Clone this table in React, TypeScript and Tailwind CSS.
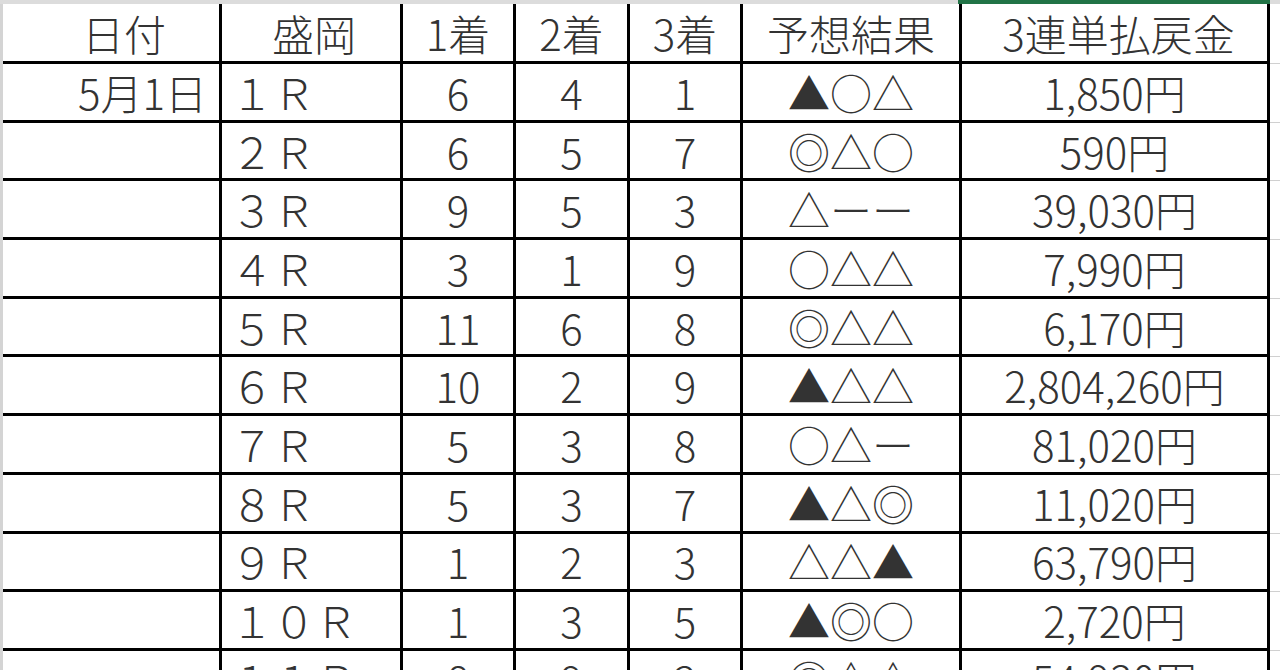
import React from "react";

type Row = { date: string; race: string; p1: string; p2: string; p3: string; marks: string; pay: string };

const rows: Row[] = [
  { date: "5月1日", race: "１Ｒ", p1: "6", p2: "4", p3: "1", marks: "▲○△", pay: "1,850円" },
  { date: "", race: "２Ｒ", p1: "6", p2: "5", p3: "7", marks: "◎△○", pay: "590円" },
  { date: "", race: "３Ｒ", p1: "9", p2: "5", p3: "3", marks: "△ーー", pay: "39,030円" },
  { date: "", race: "４Ｒ", p1: "3", p2: "1", p3: "9", marks: "○△△", pay: "7,990円" },
  { date: "", race: "５Ｒ", p1: "11", p2: "6", p3: "8", marks: "◎△△", pay: "6,170円" },
  { date: "", race: "６Ｒ", p1: "10", p2: "2", p3: "9", marks: "▲△△", pay: "2,804,260円" },
  { date: "", race: "７Ｒ", p1: "5", p2: "3", p3: "8", marks: "○△ー", pay: "81,020円" },
  { date: "", race: "８Ｒ", p1: "5", p2: "3", p3: "7", marks: "▲△◎", pay: "11,020円" },
  { date: "", race: "９Ｒ", p1: "1", p2: "2", p3: "3", marks: "△△▲", pay: "63,790円" },
  { date: "", race: "１０Ｒ", p1: "1", p2: "3", p3: "5", marks: "▲◎○", pay: "2,720円" },
  { date: "", race: "１１Ｒ", p1: "8", p2: "9", p3: "3", marks: "◎△△", pay: "54,930円" },
];

const cell = "flex items-center border-r-[3px] border-black shrink-0 h-full";

export default function App() {
  return (
    <div
      className="w-[1280px] h-[670px] overflow-hidden bg-white text-[#333333] text-[42px] font-light leading-none"
      style={{ fontFamily: '"Noto Sans CJK JP", "Noto Sans", sans-serif' }}
    >
      {/* column header edge */}
      <div className="flex h-[4px]">
        <div className="w-[958px] bg-[#dcdcdc]" />
        <div className="w-[312px] bg-[#217346]" />
        <div className="flex-1 bg-[#dcdcdc]" />
      </div>
      <div className="flex">
        <div className="w-[3px] bg-[#d4d4d4] shrink-0" />
        <div className="flex-1">
          <div className="flex h-[60px]">
            <div className="flex h-full border-b-[3px] border-black">
              <div className={`${cell} w-[219px] justify-center pl-[26px]`}>日付</div>
              <div className={`${cell} w-[181px] justify-center pl-[6px]`}>盛岡</div>
              <div className={`${cell} w-[113px] justify-center`}>1着</div>
              <div className={`${cell} w-[114px] justify-center`}>2着</div>
              <div className={`${cell} w-[113px] justify-center`}>3着</div>
              <div className={`${cell} w-[219px] justify-center`}>予想結果</div>
              <div className={`${cell} w-[308px] justify-center pl-[8px]`}>3連単払戻金</div>
            </div>
            <div className="flex-1 border-b border-[#d0d0d0]" />
          </div>
          {rows.map((r, i) => (
            <div key={i} className="flex h-[58.7px]">
              <div className="flex h-full border-b-[3px] border-black">
                <div className={`${cell} w-[219px] justify-end pr-[12px]`}>{r.date}</div>
                <div className={`${cell} w-[181px] justify-start pl-[9px]`}>{r.race}</div>
                <div className={`${cell} w-[113px] justify-center`}>{r.p1}</div>
                <div className={`${cell} w-[114px] justify-center`}>{r.p2}</div>
                <div className={`${cell} w-[113px] justify-center`}>{r.p3}</div>
                <div className={`${cell} w-[219px] justify-center`}>{r.marks}</div>
                <div className={`${cell} w-[308px] justify-center`}>{r.pay}</div>
              </div>
              <div className="flex-1 border-b border-[#d0d0d0]" />
            </div>
          ))}
        </div>
      </div>
    </div>
  );
}
